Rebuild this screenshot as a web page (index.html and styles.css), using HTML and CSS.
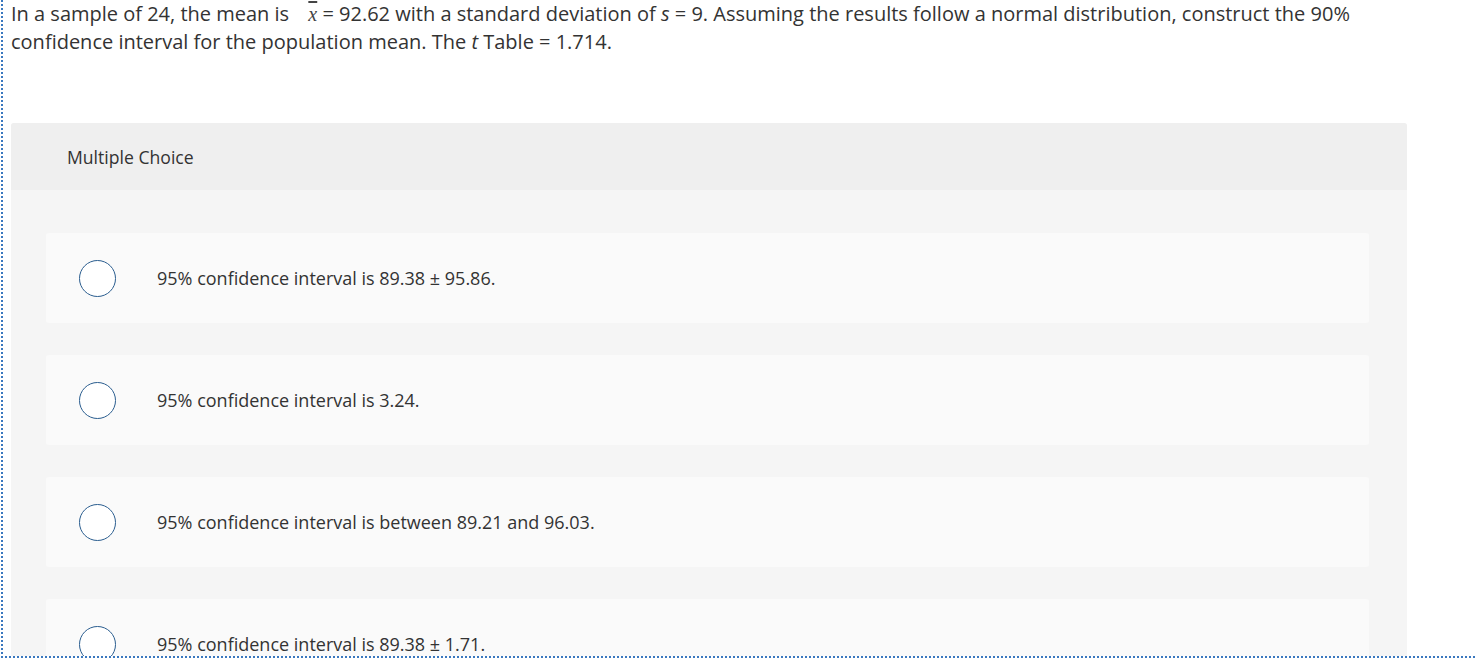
FILE: index.html
```html
<!DOCTYPE html>
<html>
<head>
<meta charset="utf-8">
<link rel="stylesheet" href="styles.css">
</head>
<body>
<div class="frame">
  <p class="question">In a sample of 24, the mean is <span class="xbar">x</span> = 92.62 with a standard deviation of <i class="var">s</i> = 9. Assuming the results follow a normal distribution, construct the 90% confidence interval for the population mean. The <i class="var">t</i> Table = 1.714.</p>
  <div class="panel">
    <div class="panel-head">Multiple Choice</div>
    <div class="options">
      <div class="option"><span class="radio"></span><span class="label">95% confidence interval is 89.38 ± 95.86.</span></div>
      <div class="option"><span class="radio"></span><span class="label">95% confidence interval is 3.24.</span></div>
      <div class="option"><span class="radio"></span><span class="label">95% confidence interval is between 89.21 and 96.03.</span></div>
      <div class="option"><span class="radio"></span><span class="label">95% confidence interval is 89.38 ± 1.71.</span></div>
    </div>
  </div>
</div>
</body>
</html>
```

FILE: styles.css
```css
html, body {
  margin: 0;
  padding: 0;
  background: #ffffff;
}
body {
  font-family: "Open Sans", "Liberation Sans", sans-serif;
  color: #333333;
}
.frame {
  height: 656px;
  overflow: hidden;
  border-left: 2px dotted #3a78bf;
  border-bottom: 2px dotted #3a78bf;
  padding-left: 8px;
  margin-left: 1px;
}
.question {
  margin: 0;
  font-size: 20px;
  line-height: 28px;
  width: 1390px;
  color: #333;
}
.xbar {
  font-family: "Liberation Serif", serif;
  font-style: italic;
  text-decoration: overline;
  margin-left: 14px;
  color: #444;
}
.var {
  font-style: italic;
}
.panel {
  margin-top: 67px;
  width: 1396px;
  background: #f5f5f5;
  border-radius: 3px 3px 0 0;
}
.panel-head {
  height: 67px;
  background: #efefef;
  border-radius: 3px 3px 0 0;
  display: flex;
  align-items: center;
  padding-left: 56px;
  font-size: 17.6px;
  color: #333;
}
.options {
  padding: 43px 38px 40px 35px;
  display: flex;
  flex-direction: column;
  gap: 32px;
}
.option {
  height: 90px;
  background: #fafafa;
  border-radius: 3px;
  display: flex;
  align-items: center;
  padding-left: 33px;
}
.radio {
  width: 35px;
  height: 35px;
  border: 1.5px solid #2a5d8f;
  border-radius: 50%;
  background: #ffffff;
  flex: none;
}
.label {
  margin-left: 41px;
  font-size: 18px;
  color: #333;
}
```
